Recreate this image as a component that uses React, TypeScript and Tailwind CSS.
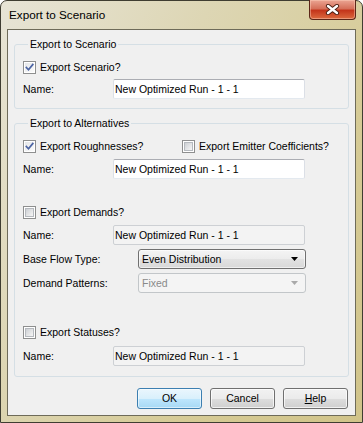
import React from 'react';

const font = "font-['Liberation_Sans',Arial,sans-serif]";
const text = 'text-[10.5px] leading-[13px] text-black';

function CheckBox({ checked = false, label }: { checked?: boolean; label: string }) {
  return (
    <div className="flex items-center">
      <span className="relative flex h-[13px] w-[13px] shrink-0 items-center justify-center border border-[#8e8f8f] bg-white">
        <span
          className={
            checked
              ? 'h-[9px] w-[9px] bg-[linear-gradient(135deg,#e4e6e9,#fbfbfb)]'
              : 'h-[9px] w-[9px] border border-[#b5b9be] bg-[linear-gradient(135deg,#cdd0d4,#f6f6f6)]'
          }
        />
        {checked && (
          <svg className="absolute left-0 top-0" width="11" height="11" viewBox="0 0 11 11">
            <path d="M2.4 5.5 L4.5 7.8 L8.8 2.5" fill="none" stroke="#4c64a3" strokeWidth="1.7" strokeLinecap="square" />
          </svg>
        )}
      </span>
      <span className={`ml-[4px] ${text}`}>{label}</span>
    </div>
  );
}

function TextBox({ value, disabled = false }: { value: string; disabled?: boolean }) {
  return (
    <div
      className={
        disabled
          ? `flex h-[20px] w-[192px] items-center rounded-[2px] border border-[#cdd0d4] bg-[#f3f3f3] pl-[1px] ${text}`
          : `flex h-[20px] w-[192px] items-center rounded-[2px] border border-[#dbdfe6] border-t-[#abadb3] border-b-[#e3e9ef] bg-white pl-[1px] ${text}`
      }
    >
      {value}
    </div>
  );
}

function Arrow({ color }: { color: string }) {
  return (
    <svg width="7" height="4" viewBox="0 0 7 4">
      <polygon points="0,0 7,0 3.5,4" fill={color} />
    </svg>
  );
}

function Combo({ value, disabled = false }: { value: string; disabled?: boolean }) {
  return (
    <div
      className={
        disabled
          ? 'flex h-[20px] w-[168px] items-center justify-between rounded-[3px] border border-[#c2c6c9] bg-[#f4f4f4] pl-[3px] pr-[7px]'
          : 'flex h-[20px] w-[168px] items-center justify-between rounded-[3px] border border-[#707070] bg-[linear-gradient(to_bottom,#f4f4f4_0%,#ececec_50%,#e2e2e2_51%,#d8d8d8_100%)] pl-[3px] pr-[7px] shadow-[inset_0_0_0_1px_rgba(255,255,255,0.6)]'
      }
    >
      <span className={disabled ? 'text-[10.5px] leading-[13px] text-[#8a8a8a]' : text}>{value}</span>
      <Arrow color={disabled ? '#a9a9a9' : '#000'} />
    </div>
  );
}

function Row({ label, labelWidth, className, children }: { label: string; labelWidth: string; className: string; children: React.ReactNode }) {
  return (
    <div className={`flex items-center ${className}`}>
      <span className={`${labelWidth} shrink-0 ${text}`}>{label}</span>
      {children}
    </div>
  );
}

function Button({ children, primary = false }: { children: React.ReactNode; primary?: boolean }) {
  return (
    <div
      className={
        primary
          ? `flex h-[21px] w-[65px] items-center justify-center rounded-[3px] border border-[#3c7fb1] bg-[linear-gradient(to_bottom,#eaf6fd_0%,#d9f0fc_50%,#bee6fd_51%,#a7d9f5_100%)] shadow-[inset_0_0_0_1px_rgba(255,255,255,0.55)] ${text}`
          : `flex h-[21px] w-[65px] items-center justify-center rounded-[3px] border border-[#707070] bg-[linear-gradient(to_bottom,#f2f2f2_0%,#ebebeb_50%,#dddddd_51%,#cfcfcf_100%)] shadow-[inset_0_0_0_1px_rgba(255,255,255,0.7)] ${text}`
      }
    >
      {children}
    </div>
  );
}

const NAME = 'New Optimized Run - 1 - 1';

export default function App() {
  return (
    <div
      className={`flex h-[423px] w-[363px] flex-col rounded-t-[7px] border border-[#3f3d31] bg-[linear-gradient(120deg,#e7e4d6_0%,#ddd6b4_35%,#d6cb96_70%,#d1c48a_100%)] px-[6px] pb-[6px] ${font}`}
    >
      {/* title bar */}
      <div className="flex h-[28px] shrink-0 justify-between">
        <span className="ml-[2px] mt-[7px] text-[11.7px] leading-[14px] text-black">Export to Scenario</span>
        <div className="-mt-[1px] flex h-[20px] w-[47px] items-center justify-center rounded-b-[4px] border border-t-0 border-[#5b2618] bg-[linear-gradient(to_bottom,#eba593_0%,#d5705a_45%,#c4351b_55%,#dc6a3f_100%)] shadow-[inset_0_0_0_1px_rgba(255,210,190,0.45)]">
          <svg width="15" height="11" viewBox="0 0 15 11">
            <path d="M3 2 L12 9 M12 2 L3 9" stroke="#4a1e12" strokeWidth="4.2" strokeLinecap="round" />
            <path d="M3 2 L12 9 M12 2 L3 9" stroke="#ffffff" strokeWidth="2.4" strokeLinecap="round" />
          </svg>
        </div>
      </div>

      {/* client area */}
      <div className="flex flex-1 flex-col border border-[#6e6b59] bg-[#f0f0f0]">
        <fieldset className="mx-[6px] mt-[7px] rounded-[3px] border border-[#d5dfe5] pb-[8px] pl-[8px]">
          <legend className={`ml-[5px] px-[2px] ${text} leading-[14px]`}>Export to Scenario</legend>
          <div className="mt-[6px] flex h-[20px] items-center">
            <CheckBox checked label="Export Scenario?" />
          </div>
          <Row label="Name:" labelWidth="w-[90px]" className="mt-[1px] h-[22px]">
            <TextBox value={NAME} />
          </Row>
        </fieldset>

        <fieldset className="mx-[6px] mt-[7px] rounded-[3px] border border-[#d5dfe5] pb-[9px] pl-[8px]">
          <legend className={`ml-[5px] px-[2px] ${text} leading-[14px]`}>Export to Alternatives</legend>
          <div className="mt-[6px] flex h-[20px] items-center">
            <div className="w-[159px]">
              <CheckBox checked label="Export Roughnesses?" />
            </div>
            <CheckBox label="Export Emitter Coefficients?" />
          </div>
          <Row label="Name:" labelWidth="w-[90px]" className="mt-[2px] h-[22px]">
            <TextBox value={NAME} />
          </Row>

          <div className="mt-[22px] flex h-[20px] items-center">
            <CheckBox label="Export Demands?" />
          </div>
          <Row label="Name:" labelWidth="w-[90px]" className="mt-[2px] h-[22px]">
            <TextBox value={NAME} disabled />
          </Row>
          <Row label="Base Flow Type:" labelWidth="w-[115px]" className="mt-[2px] h-[22px]">
            <Combo value="Even Distribution" />
          </Row>
          <Row label="Demand Patterns:" labelWidth="w-[115px]" className="mt-[2px] h-[22px]">
            <Combo value="Fixed" disabled />
          </Row>

          <div className="mt-[28px] flex h-[20px] items-center">
            <CheckBox label="Export Statuses?" />
          </div>
          <Row label="Name:" labelWidth="w-[90px]" className="mt-[3px] h-[22px]">
            <TextBox value={NAME} disabled />
          </Row>
        </fieldset>

        <div className="mr-[7px] mt-[11px] flex justify-end gap-[8px]">
          <Button primary>OK</Button>
          <Button>Cancel</Button>
          <Button>
            <span className="underline underline-offset-[1px]">H</span>elp
          </Button>
        </div>
      </div>
    </div>
  );
}
